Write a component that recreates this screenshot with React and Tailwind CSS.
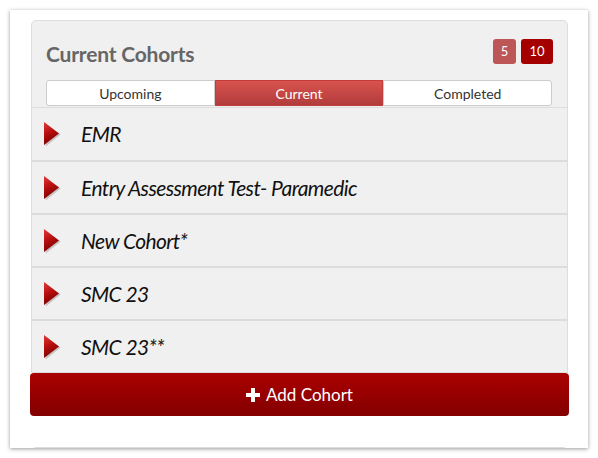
import React from 'react';

const cohorts = ['EMR', 'Entry Assessment Test- Paramedic', 'New Cohort*', 'SMC 23', 'SMC 23**'];

function Arrow() {
  return (
    <svg width="18" height="26" viewBox="0 0 18 26" className="shrink-0">
      <defs>
        <linearGradient id="arrowFill" x1="0" y1="0" x2="0.3" y2="1">
          <stop offset="0" stopColor="#e23a3a" />
          <stop offset="0.5" stopColor="#b80f0f" />
          <stop offset="1" stopColor="#7d0000" />
        </linearGradient>
      </defs>
      <polygon points="2,2 17,13 2,25" fill="#000" opacity="0.18" transform="translate(0.6,0.6)" />
      <polygon points="1,1 16,12.5 1,24" fill="url(#arrowFill)" />
    </svg>
  );
}

export default function App() {
  const font = { fontFamily: 'Lato, "Open Sans", sans-serif' };
  return (
    <div className="w-[598px] h-[458px] bg-white p-[10px]" style={font}>
      <div className="w-[578px] h-[438px] bg-white shadow-[0_1px_4px_rgba(0,0,0,0.4)] overflow-hidden pt-[10px] pl-[21px] pr-[20px]">
        <div className="bg-[#f0f0f0] border border-[#dddddd] rounded-t-[5px] pt-[18px]">
          <div className="h-[25px] px-[14px] pr-[14px] flex items-center justify-between">
            <h2 className="pt-[5px] text-[21px] font-bold text-[#666666] tracking-[-0.2px]">Current Cohorts</h2>
            <div className="flex gap-[5px] text-[13px] text-white">
              <span className="w-[23px] h-[25px] rounded-[3px] bg-[#bd5656] flex items-center justify-center">5</span>
              <span className="w-[32px] h-[25px] rounded-[3px] bg-[#a50000] flex items-center justify-center">10</span>
            </div>
          </div>
          <div className="mt-[16px] mx-[14px] mr-[15px] h-[26px] flex text-[14px] text-[#333333] mb-[1px]">
            <div className="flex-1 bg-white border border-[#cccccc] rounded-l-[3px] flex items-center justify-center">Upcoming</div>
            <div className="flex-1 bg-gradient-to-b from-[#d9534f] to-[#b13c3c] border border-[#c23c3c] text-white flex items-center justify-center">Current</div>
            <div className="flex-1 bg-white border border-[#cccccc] rounded-r-[3px] flex items-center justify-center">Completed</div>
          </div>
          <ul>
            {cohorts.map((c, i) => (
              <li
                key={c}
                className={`h-[53px] flex items-center pl-[11px] gap-[20px] ${i === 0 ? 'border-t border-[#dddddd]' : 'border-t-2 border-[#dcdcdc]'}`}
              >
                <Arrow />
                <span className="text-[21px] italic text-[#111111] tracking-[-0.6px]">{c}</span>
              </li>
            ))}
          </ul>
        </div>
        <button className="-mx-px w-[539px] h-[43px] rounded-[4px] bg-gradient-to-b from-[#ab0000] to-[#830000] text-white text-[17px] flex items-center justify-center gap-[6px]">
          <svg width="14" height="14" viewBox="0 0 14 14">
            <path d="M5 0h4v5h5v4H9v5H5V9H0V5h5z" fill="#fff" />
          </svg>
          Add Cohort
        </button>
        <div className="mt-[31px] h-[20px] bg-[#f5f5f5] border border-[#dddddd] rounded-t-[5px]" />
      </div>
    </div>
  );
}
